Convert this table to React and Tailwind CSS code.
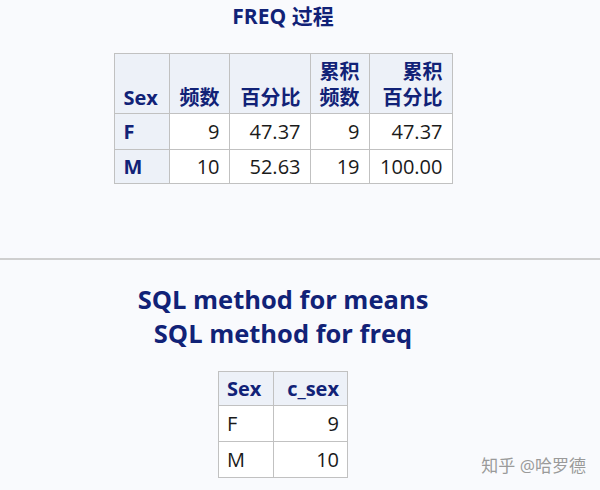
import React from "react";

const F = { fontFamily: '"Open Sans", "Noto Sans CJK SC", sans-serif' };

export default function App() {
  const th = "border border-[#c1c1c1] bg-[#edf1f8] text-[#112277] font-bold px-[9px] align-bottom text-right leading-[26px]";
  const td = "border border-[#c1c1c1] bg-white text-[#1a1a1a] px-[9px] text-right";
  return (
    <div className="w-[600px] h-[490px] bg-[#f9fafd] relative overflow-hidden" style={F}>
      <div className="h-[258px] flex flex-col items-center">
        <div className="mt-[3px] ml-[-34px] text-[21px] font-bold text-[#112277] leading-[26px]">FREQ 过程</div>
        <table className="mt-[24px] ml-[-34px] border-collapse text-[20px]">
          <thead>
            <tr className="h-[60px]">
              <th className={th + " w-[55px] !text-left pb-[2px]"}>Sex</th>
              <th className={th + " w-[60px] pb-[2px]"}>频数</th>
              <th className={th + " w-[81px] pb-[2px]"}>百分比</th>
              <th className={th + " w-[59px] pb-[2px]"}>累积<br />频数</th>
              <th className={th + " w-[83px] pb-[2px]"}>累积<br />百分比</th>
            </tr>
          </thead>
          <tbody>
            <tr className="h-[36px]">
              <th className={th + " !text-left !align-middle"}>F</th>
              <td className={td}>9</td>
              <td className={td}>47.37</td>
              <td className={td}>9</td>
              <td className={td}>47.37</td>
            </tr>
            <tr className="h-[34px]">
              <th className={th + " !text-left !align-middle"}>M</th>
              <td className={td}>10</td>
              <td className={td}>52.63</td>
              <td className={td}>19</td>
              <td className={td}>100.00</td>
            </tr>
          </tbody>
        </table>
      </div>
      <div className="h-[2px] bg-[#cfcfcf]" />
      <div className="flex flex-col items-center">
        <div className="mt-[22px] ml-[-34px] text-[25.5px] font-bold text-[#112277] leading-[34px] text-center">
          SQL method for means
          <br />
          SQL method for freq
        </div>
        <table className="mt-[21px] ml-[-34px] border-collapse text-[20px]">
          <thead>
            <tr className="h-[34px]">
              <th className={th + " w-[55px] !text-left !align-middle !px-[8px]"}>Sex</th>
              <th className={th + " w-[74px] !text-right !align-middle !px-[8px]"}>c_sex</th>
            </tr>
          </thead>
          <tbody>
            <tr className="h-[36px]">
              <td className={td + " !text-left !px-[8px]"}>F</td>
              <td className={td + " !px-[8px]"}>9</td>
            </tr>
            <tr className="h-[36px]">
              <td className={td + " !text-left !px-[8px]"}>M</td>
              <td className={td + " !px-[8px]"}>10</td>
            </tr>
          </tbody>
        </table>
      </div>
      <div className="absolute right-[14px] bottom-[14px] text-[17px] text-[#9a9a9a] leading-[20px]">知乎 @哈罗德</div>
    </div>
  );
}
